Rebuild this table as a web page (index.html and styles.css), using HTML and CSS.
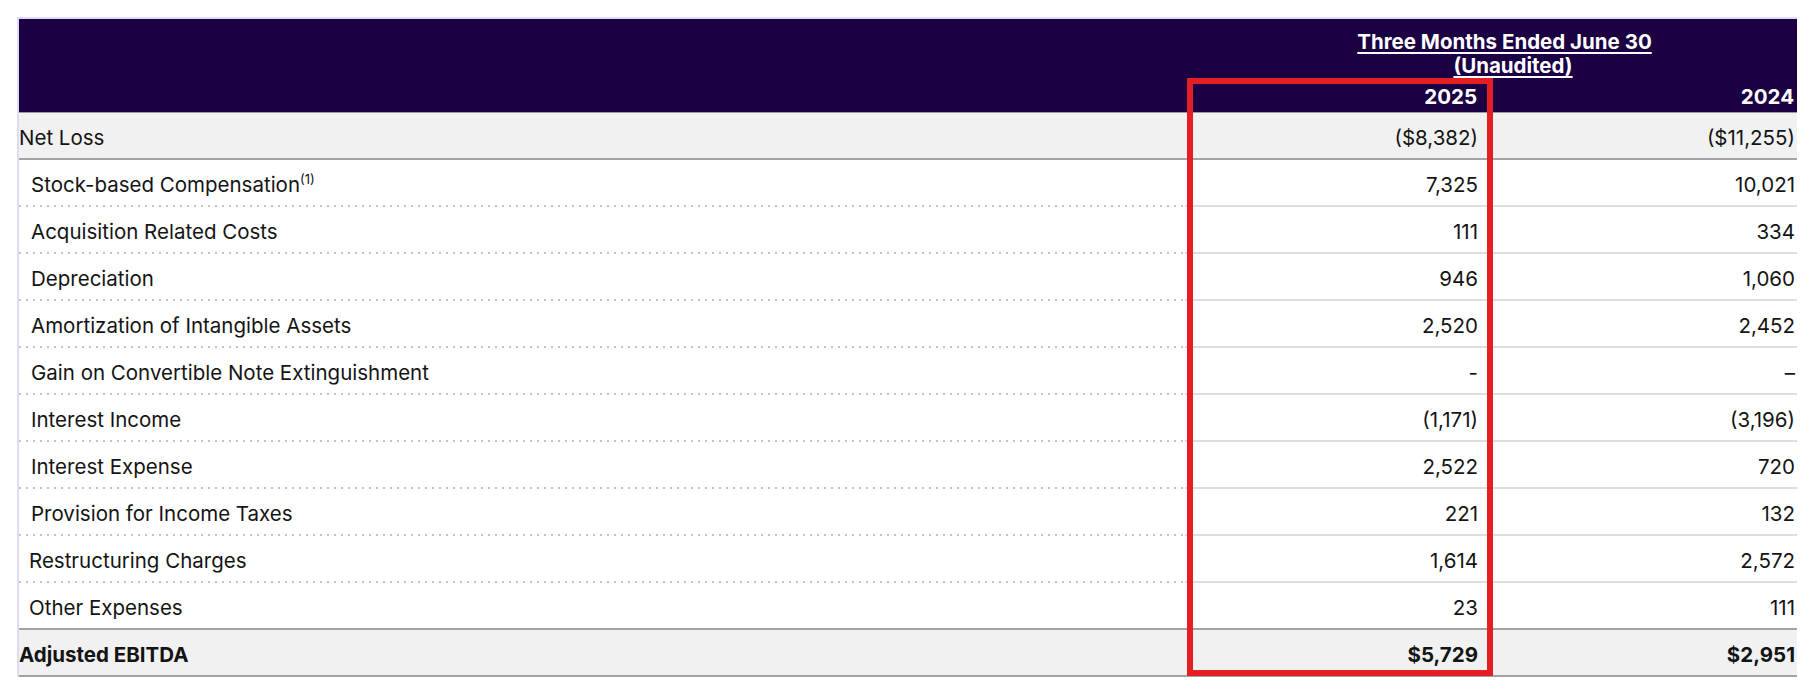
FILE: index.html
```html
<!DOCTYPE html>
<html lang="en">
<head>
<meta charset="utf-8">
<title>Adjusted EBITDA Reconciliation</title>
<link rel="stylesheet" href="styles.css">
</head>
<body>
<div class="report">
  <table class="recon">
    <colgroup>
      <col class="col-label">
      <col class="col-cur">
      <col class="col-prior">
    </colgroup>
    <thead>
      <tr class="head-period">
        <th class="blank"></th>
        <th class="period" colspan="2">
          <span class="period-line period-line-1">Three Months Ended June 30</span>
          <span class="period-line period-line-2">(Unaudited)</span>
        </th>
      </tr>
      <tr class="head-years">
        <th class="blank"></th>
        <th class="year">2025</th>
        <th class="year">2024</th>
      </tr>
    </thead>
    <tbody>
      <tr class="row-total row-top">
        <td class="label">Net Loss</td>
        <td class="num">($8,382)</td>
        <td class="num">($11,255)</td>
      </tr>
      <tr class="row-item">
        <td class="label">Stock-based Compensation<sup class="note">(1)</sup></td>
        <td class="num">7,325</td>
        <td class="num">10,021</td>
      </tr>
      <tr class="row-item">
        <td class="label">Acquisition Related Costs</td>
        <td class="num">111</td>
        <td class="num">334</td>
      </tr>
      <tr class="row-item">
        <td class="label">Depreciation</td>
        <td class="num">946</td>
        <td class="num">1,060</td>
      </tr>
      <tr class="row-item">
        <td class="label">Amortization of Intangible Assets</td>
        <td class="num">2,520</td>
        <td class="num">2,452</td>
      </tr>
      <tr class="row-item">
        <td class="label">Gain on Convertible Note Extinguishment</td>
        <td class="num">-</td>
        <td class="num">&ndash;</td>
      </tr>
      <tr class="row-item">
        <td class="label">Interest Income</td>
        <td class="num">(1,171)</td>
        <td class="num">(3,196)</td>
      </tr>
      <tr class="row-item">
        <td class="label">Interest Expense</td>
        <td class="num">2,522</td>
        <td class="num">720</td>
      </tr>
      <tr class="row-item">
        <td class="label">Provision for Income Taxes</td>
        <td class="num">221</td>
        <td class="num">132</td>
      </tr>
      <tr class="row-item">
        <td class="label label-tight">Restructuring Charges</td>
        <td class="num">1,614</td>
        <td class="num">2,572</td>
      </tr>
      <tr class="row-item row-last">
        <td class="label label-tight">Other Expenses</td>
        <td class="num">23</td>
        <td class="num">111</td>
      </tr>
      <tr class="row-total row-bottom">
        <td class="label">Adjusted EBITDA</td>
        <td class="num">$5,729</td>
        <td class="num">$2,951</td>
      </tr>
    </tbody>
  </table>
  <div class="highlight" aria-hidden="true"></div>
</div>
</body>
</html>
```

FILE: styles.css
```css
html, body {
  margin: 0;
  padding: 0;
  background: #ffffff;
}

body {
  font-family: Inter, "Noto Sans", "Liberation Sans", sans-serif;
  color: #141414;
}

.report {
  position: relative;
  padding: 17px 22px 0 17px;
}

.recon {
  width: 1780px;
  table-layout: fixed;
  border-collapse: separate;
  border-spacing: 0;
  border-top: 2px solid #dcdcf4;
  border-left: 2px solid #dcdcf4;
  font-size: 20.5px;
}

.col-label { width: 1166px; }
.col-cur { width: 295px; }
.col-prior { width: 317px; }

/* Header */
.recon thead th {
  background: #1b0044;
  color: #ffffff;
  font-weight: 700;
  padding: 0;
  line-height: 24px;
}

.recon .head-period th {
  padding: 11px 0 0;
  vertical-align: top;
}

.recon .period {
  text-align: center;
}

.period-line {
  display: block;
  text-decoration: underline;
  text-decoration-thickness: 2px;
  text-underline-offset: 3px;
}

.period-line-1 { padding-left: 27px; }
.period-line-2 { padding-left: 44px; }

.recon .head-years th {
  padding: 7px 0 3px;
  border-bottom: 1px solid #9a9a9a;
}

.recon .head-years th.year {
  text-align: right;
  padding-right: 3px;
}

/* Body */
.recon td {
  padding: 12px 2px 8px 0;
  line-height: 25px;
  white-space: nowrap;
}

.recon td.label {
  text-align: left;
  padding-left: 12px;
}

.recon td.label-tight {
  padding-left: 10px;
}

.num {
  text-align: right;
}

.note {
  font-size: 13px;
  line-height: 0;
  vertical-align: 8px;
}

.row-item td {
  border-bottom: 2px solid #dedede;
}

.row-item td.label {
  border-bottom-color: transparent;
  background-image: linear-gradient(to right, #c4c4c4 2px, transparent 2px);
  background-size: 7px 2px;
  background-repeat: repeat-x;
  background-position: left bottom;
  background-origin: border-box;
}

.row-item.row-last td,
.row-item.row-last td.label {
  border-bottom: 2px solid #a3a3a3;
  background-image: none;
}

.row-total td {
  background: #f1f1f1;
  border-bottom: 2px solid #a3a3a3;
}

.recon .row-total td.label {
  padding-left: 0;
}

.row-bottom td {
  font-weight: 700;
}

/* Annotation overlay */
.highlight {
  position: absolute;
  left: 1187px;
  top: 78px;
  width: 294px;
  height: 586px;
  border: 6px solid #e31f24;
  pointer-events: none;
}
```
